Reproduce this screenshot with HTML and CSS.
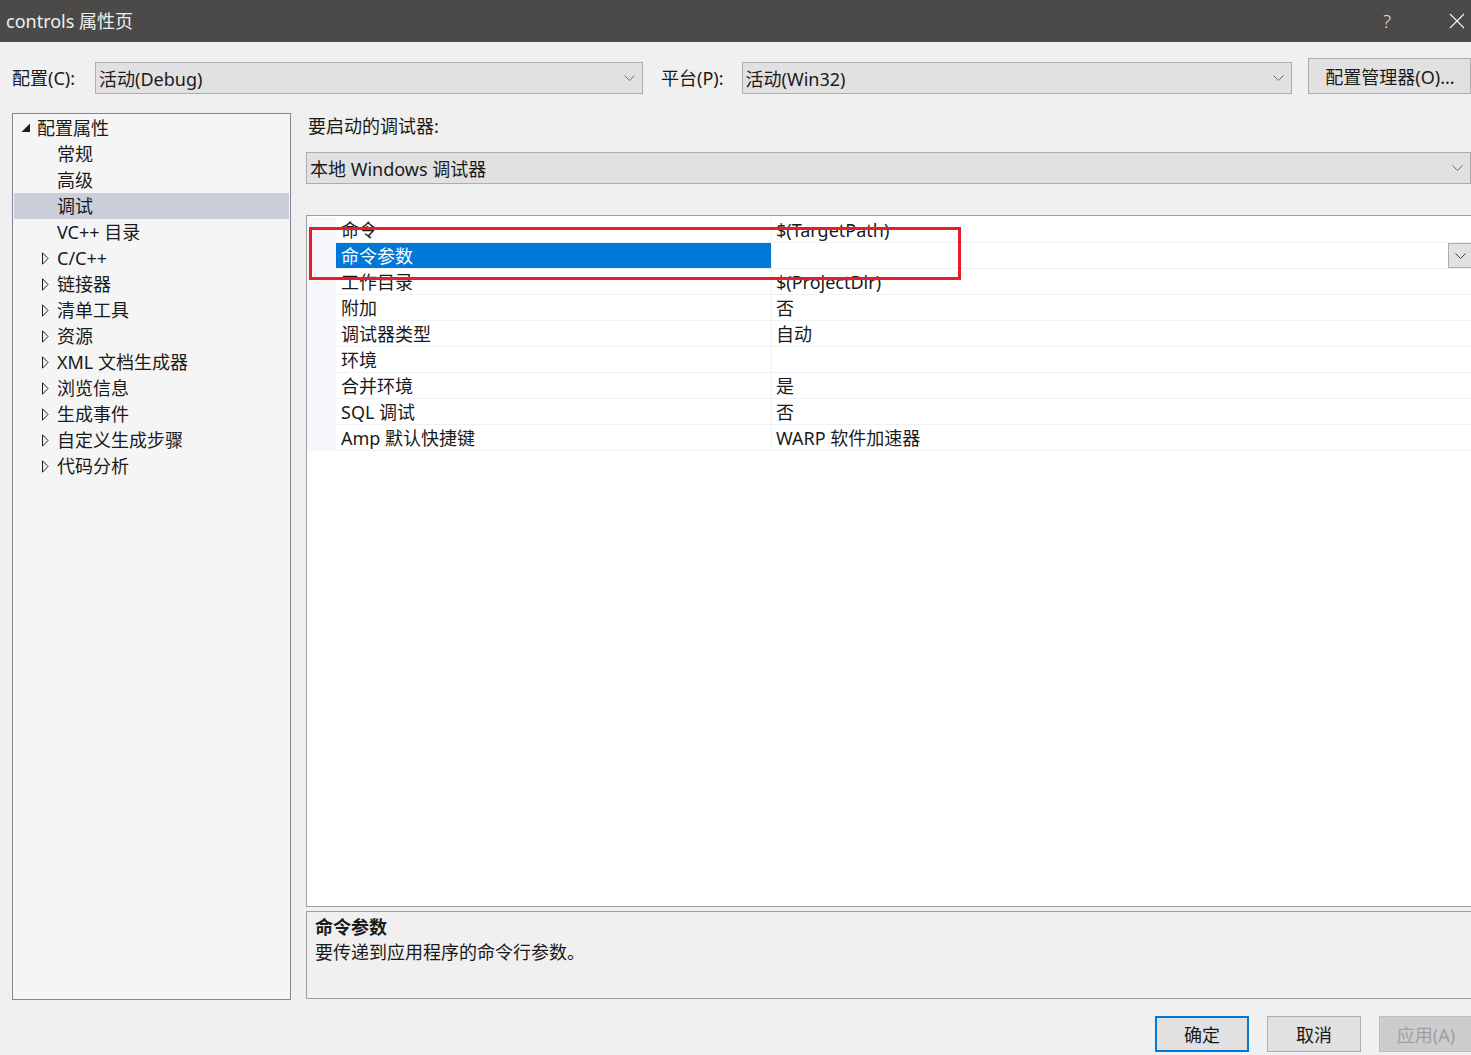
FILE: index.html
```html
<!DOCTYPE html>
<html lang="zh-CN">
<head>
    <meta charset="UTF-8">
    <title>controls 属性页</title>
    <link rel="stylesheet" href="styles.css">
</head>
<body>
    <div class="titlebar">
        <span class="title">controls 属性页</span>
        <span class="tb-help">?</span>
        <span class="tb-close">
            <svg width="16" height="16" viewBox="0 0 16 16"><path d="M1 1L15 15M15 1L1 15" stroke="#f0f0f0" stroke-width="1.2" fill="none"/></svg>
        </span>
    </div>

    <div class="toolbar">
        <span class="tb-label">配置(C):</span>
        <div class="combo combo-config">
            <span>活动(Debug)</span>
            <svg class="chev" width="11" height="6" viewBox="0 0 11 6"><path d="M0.5 0.5L5.5 5.5L10.5 0.5" stroke="#6d6d6d" fill="none"/></svg>
        </div>
        <span class="tb-label">平台(P):</span>
        <div class="combo combo-platform">
            <span>活动(Win32)</span>
            <svg class="chev" width="11" height="6" viewBox="0 0 11 6"><path d="M0.5 0.5L5.5 5.5L10.5 0.5" stroke="#6d6d6d" fill="none"/></svg>
        </div>
        <button class="btn btn-manager">配置管理器(O)...</button>
    </div>

    <div class="main">
        <div class="tree">
            <div class="tree-item root">
                <span class="twisty"><svg width="10" height="10" viewBox="0 0 10 10"><path d="M9 0.5V9H0.5Z" fill="#1e1e1e"/></svg></span>配置属性
            </div>
            <div class="tree-item"><span class="twisty"></span>常规</div>
            <div class="tree-item"><span class="twisty"></span>高级</div>
            <div class="tree-item selected"><span class="twisty"></span>调试</div>
            <div class="tree-item"><span class="twisty"></span>VC++ 目录</div>
            <div class="tree-item"><span class="twisty"><svg width="8" height="13" viewBox="0 0 8 13"><path d="M1.5 0.8V12.2L7 6.5Z" stroke="#1e1e1e" fill="none"/></svg></span>C/C++</div>
            <div class="tree-item"><span class="twisty"><svg width="8" height="13" viewBox="0 0 8 13"><path d="M1.5 0.8V12.2L7 6.5Z" stroke="#1e1e1e" fill="none"/></svg></span>链接器</div>
            <div class="tree-item"><span class="twisty"><svg width="8" height="13" viewBox="0 0 8 13"><path d="M1.5 0.8V12.2L7 6.5Z" stroke="#1e1e1e" fill="none"/></svg></span>清单工具</div>
            <div class="tree-item"><span class="twisty"><svg width="8" height="13" viewBox="0 0 8 13"><path d="M1.5 0.8V12.2L7 6.5Z" stroke="#1e1e1e" fill="none"/></svg></span>资源</div>
            <div class="tree-item"><span class="twisty"><svg width="8" height="13" viewBox="0 0 8 13"><path d="M1.5 0.8V12.2L7 6.5Z" stroke="#1e1e1e" fill="none"/></svg></span>XML 文档生成器</div>
            <div class="tree-item"><span class="twisty"><svg width="8" height="13" viewBox="0 0 8 13"><path d="M1.5 0.8V12.2L7 6.5Z" stroke="#1e1e1e" fill="none"/></svg></span>浏览信息</div>
            <div class="tree-item"><span class="twisty"><svg width="8" height="13" viewBox="0 0 8 13"><path d="M1.5 0.8V12.2L7 6.5Z" stroke="#1e1e1e" fill="none"/></svg></span>生成事件</div>
            <div class="tree-item"><span class="twisty"><svg width="8" height="13" viewBox="0 0 8 13"><path d="M1.5 0.8V12.2L7 6.5Z" stroke="#1e1e1e" fill="none"/></svg></span>自定义生成步骤</div>
            <div class="tree-item"><span class="twisty"><svg width="8" height="13" viewBox="0 0 8 13"><path d="M1.5 0.8V12.2L7 6.5Z" stroke="#1e1e1e" fill="none"/></svg></span>代码分析</div>
        </div>

        <div class="pane">
            <div class="pane-label">要启动的调试器:</div>
            <div class="combo combo-debugger">
                <span>本地 Windows 调试器</span>
                <svg class="chev" width="11" height="6" viewBox="0 0 11 6"><path d="M0.5 0.5L5.5 5.5L10.5 0.5" stroke="#6d6d6d" fill="none"/></svg>
            </div>

            <div class="grid">
                <div class="grid-row">
                    <div class="gutter"></div>
                    <div class="cell name">命令</div>
                    <div class="cell value">$(TargetPath)</div>
                </div>
                <div class="grid-row">
                    <div class="gutter"></div>
                    <div class="cell name active">命令参数</div>
                    <div class="cell value has-drop">
                        <span class="drop-btn"><svg width="11" height="6" viewBox="0 0 11 6"><path d="M0.5 0.5L5.5 5.5L10.5 0.5" stroke="#404040" fill="none"/></svg></span>
                    </div>
                </div>
                <div class="grid-row">
                    <div class="gutter"></div>
                    <div class="cell name">工作目录</div>
                    <div class="cell value">$(ProjectDir)</div>
                </div>
                <div class="grid-row">
                    <div class="gutter"></div>
                    <div class="cell name">附加</div>
                    <div class="cell value">否</div>
                </div>
                <div class="grid-row">
                    <div class="gutter"></div>
                    <div class="cell name">调试器类型</div>
                    <div class="cell value">自动</div>
                </div>
                <div class="grid-row">
                    <div class="gutter"></div>
                    <div class="cell name">环境</div>
                    <div class="cell value"></div>
                </div>
                <div class="grid-row">
                    <div class="gutter"></div>
                    <div class="cell name">合并环境</div>
                    <div class="cell value">是</div>
                </div>
                <div class="grid-row">
                    <div class="gutter"></div>
                    <div class="cell name">SQL 调试</div>
                    <div class="cell value">否</div>
                </div>
                <div class="grid-row">
                    <div class="gutter"></div>
                    <div class="cell name">Amp 默认快捷键</div>
                    <div class="cell value">WARP 软件加速器</div>
                </div>
                <div class="highlight"></div>
            </div>

            <div class="desc">
                <div class="desc-title">命令参数</div>
                <div class="desc-text">要传递到应用程序的命令行参数。</div>
            </div>
        </div>
    </div>

    <div class="footer">
        <button class="btn btn-ok">确定</button>
        <button class="btn">取消</button>
        <button class="btn btn-disabled">应用(A)</button>
    </div>
</body>
</html>
```

FILE: styles.css
```css
html, body {
    margin: 0;
    height: 100%;
}
body {
    font-family: "Noto Sans", "Noto Sans CJK SC", sans-serif;
    font-size: 18px;
    color: #1a1a1a;
    background-color: #f0f0f0;
    overflow: hidden;
}
.titlebar {
    height: 42px;
    background-color: #4b4a48;
    color: #f0f0f0;
    display: flex;
    align-items: center;
    padding-left: 6px;
}
.title {
    flex: 1;
    line-height: 38px;
}
.tb-help {
    font-size: 19px;
    font-weight: 300;
    color: #e0e0e0;
    margin-right: 58px;
}
.tb-close {
    display: flex;
    margin-right: 6px;
}
.toolbar {
    display: flex;
    align-items: flex-end;
    padding: 16px 0 0 12px;
    height: 36px;
}
.tb-label {
    line-height: 32px;
    white-space: nowrap;
}
.combo {
    box-sizing: border-box;
    height: 32px;
    background-color: #e1e1e1;
    border: 1px solid #adadad;
    display: flex;
    align-items: center;
    justify-content: space-between;
    padding: 0 7px 0 3px;
    white-space: nowrap;
}
.combo-config {
    width: 548px;
    margin-left: 20px;
    margin-right: 18px;
}
.combo-platform {
    width: 550px;
    margin-left: 18px;
    margin-right: 16px;
}
.combo-debugger {
    width: 1165px;
    margin-top: 12px;
}
.btn {
    box-sizing: border-box;
    height: 36px;
    font-family: inherit;
    font-size: 18px;
    color: #1a1a1a;
    background-color: #e1e1e1;
    border: 1px solid #adadad;
    padding: 0;
    white-space: nowrap;
}
.btn-manager {
    width: 163px;
    padding-left: 2px;
}
.main {
    display: flex;
    margin-top: 19px;
    padding-left: 12px;
}
.tree {
    box-sizing: border-box;
    flex: 0 0 279px;
    height: 887px;
    background-color: #f5f5f5;
    border: 1px solid #828790;
    padding: 1px 1px 0 1px;
}
.tree-item {
    display: flex;
    align-items: center;
    height: 26px;
    line-height: 25px;
    padding-left: 27px;
    white-space: nowrap;
}
.tree-item.root {
    padding-left: 7px;
}
.tree-item.selected {
    background-color: #cccedb;
}
.twisty {
    flex: 0 0 16px;
    display: flex;
    align-items: center;
}
.pane {
    flex: 0 0 1170px;
    margin-left: 15px;
}
.pane-label {
    line-height: 26px;
    padding: 0 0 0 2px;
    height: 27px;
}
.grid {
    position: relative;
    box-sizing: border-box;
    height: 692px;
    margin-top: 31px;
    background-color: #fff;
    border: 1px solid #a0a0a0;
    padding-top: 1px;
}
.grid-row {
    display: flex;
    height: 26px;
}
.gutter {
    flex: 0 0 29px;
    background-color: #f5f7fb;
}
.cell {
    box-sizing: border-box;
    height: 26px;
    line-height: 26px;
    border-bottom: 1px solid #eef1f6;
    padding-left: 5px;
    white-space: nowrap;
}
.cell.name {
    flex: 0 0 435px;
}
.cell.name.active {
    background-color: #0078d7;
    color: #fff;
}
.cell.value {
    flex: 1;
    border-left: 1px solid #eef1f6;
    padding-left: 4px;
}
.cell.value.has-drop {
    display: flex;
    justify-content: flex-end;
}
.drop-btn {
    box-sizing: border-box;
    width: 24px;
    height: 25px;
    margin-right: 3px;
    background-color: #e1e1e1;
    border: 1px solid #adadad;
    display: flex;
    align-items: center;
    justify-content: center;
}
.highlight {
    position: absolute;
    left: 2px;
    top: 11px;
    width: 652px;
    height: 53px;
    box-sizing: border-box;
    border: 3px solid #ea1c28;
}
.desc {
    box-sizing: border-box;
    height: 88px;
    margin-top: 4px;
    border: 1px solid #a0a0a0;
    padding: 3px 0 0 8px;
}
.desc-title {
    font-weight: bold;
    line-height: 25px;
}
.desc-text {
    line-height: 25px;
}
.footer {
    display: flex;
    justify-content: flex-end;
    gap: 18px;
    margin-top: 16px;
    margin-right: -2px;
}
.footer .btn {
    width: 94px;
}
.btn-ok {
    border: 2px solid #0078d7;
}
.btn-disabled {
    background-color: #cccccc;
    border-color: #bfbfbf;
    color: #a0a0a0;
}
```
